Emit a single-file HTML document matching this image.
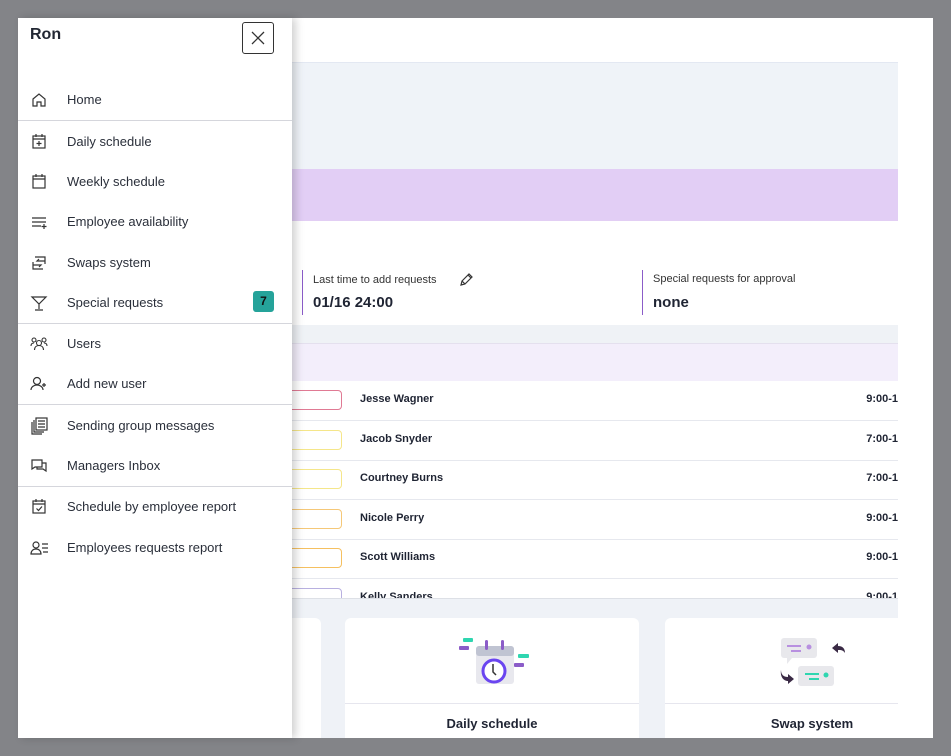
<!DOCTYPE html>
<html><head><style>
*{margin:0;padding:0;box-sizing:border-box}
body{width:951px;height:756px;background:#838488;font-family:"Liberation Sans",sans-serif;position:relative;overflow:hidden;color:#1f2433}
.abs{position:absolute}
#main{left:18px;top:18px;width:915px;height:720px;background:#fff;overflow:hidden}
#clip{left:0;top:0;width:880px;height:720px;overflow:hidden}
.row{position:absolute;left:274px;width:606px;height:40px;border-bottom:1px solid #e6e8ee;font-size:11px;font-weight:bold}
.row .b{position:absolute;left:-20px;top:9px;width:70px;height:20px;border:1px solid;border-radius:4px}
.row .n{position:absolute;left:68px;top:12px}
.row .t{position:absolute;right:0;top:12px}
#side{left:18px;top:18px;width:274px;height:720px;background:#fff;box-shadow:4px 0 8px rgba(0,0,0,.18)}
.it{position:absolute;left:0;width:274px;font-size:13px;color:#2a2f3a}
.it span{position:absolute;left:49px}
.it svg{position:absolute;left:12px;top:-1px}
.sep{position:absolute;left:0;width:274px;height:1px;background:#d5d6dc}
.card{position:absolute;top:600px;height:130px;background:#fff;border-radius:6px}
</style></head><body>
<div id="main" class="abs"><div id="clip" class="abs">
 <div class="abs" style="left:0;top:44px;width:880px;height:107px;background:#eff3f8;border-top:1px solid #e3e8f2"></div>
 <div class="abs" style="left:0;top:151px;width:880px;height:52px;background:#e2cef5"></div>
 <div class="abs" style="left:0;top:203px;width:880px;height:104px;background:#fff;box-shadow:0 2px 3px rgba(0,0,0,.08)"></div>
 <div class="abs" style="left:284px;top:252px;width:1px;height:45px;background:#8b5cc8"></div>
 <div class="abs" style="left:295px;top:256px;font-size:11px;color:#333">Last time to add requests</div>
 <svg class="abs" style="left:440px;top:254px" width="16" height="16" viewBox="0 0 16 16"><path d="M3 13l1-4 7-7 3 3-7 7z M10 3l3 3 M4 9l3 3" fill="none" stroke="#333" stroke-width="1.2"/></svg>
 <div class="abs" style="left:295px;top:276px;font-size:15px;font-weight:bold">01/16 24:00</div>
 <div class="abs" style="left:624px;top:252px;width:1px;height:45px;background:#8b5cc8"></div>
 <div class="abs" style="left:635px;top:255px;font-size:11px;color:#333">Special requests for approval</div>
 <div class="abs" style="left:635px;top:276px;font-size:15px;font-weight:bold">none</div>
 <div class="abs" style="left:0;top:307px;width:880px;height:18px;background:#eff2f6"></div>
 <div class="abs" style="left:0;top:325px;width:880px;height:38px;background:#f3eefb;border-top:1px solid #e4e0ee"></div>
 <div class="row" style="top:363px"><div class="b" style="border-color:#e07a94"></div><div class="n">Jesse Wagner</div><div class="t">9:00-1</div></div>
 <div class="row" style="top:403px"><div class="b" style="border-color:#f5e68a"></div><div class="n">Jacob Snyder</div><div class="t">7:00-1</div></div>
 <div class="row" style="top:442px"><div class="b" style="border-color:#f5e68a"></div><div class="n">Courtney Burns</div><div class="t">7:00-1</div></div>
 <div class="row" style="top:482px"><div class="b" style="border-color:#f5c878"></div><div class="n">Nicole Perry</div><div class="t">9:00-1</div></div>
 <div class="row" style="top:521px"><div class="b" style="border-color:#f5c060"></div><div class="n">Scott Williams</div><div class="t">9:00-1</div></div>
 <div class="row" style="top:561px;height:19px;overflow:hidden;border:none"><div class="b" style="border-color:#b8b0e0"></div><div class="n">Kelly Sanders</div><div class="t">9:00-1</div></div>
 <div class="abs" style="left:0;top:580px;width:880px;height:140px;background:#eff2f7;border-top:1px solid #dde0e6"></div>
 <div class="card" style="left:60px;width:243px"></div>
 <div class="card" style="left:327px;width:294px">
  <div class="abs" style="left:0;top:85px;width:294px;height:1px;background:#e6e6ee"></div>
  <div class="abs" style="left:0;top:98px;width:294px;text-align:center;font-size:13px;font-weight:bold">Daily schedule</div>
  <svg class="abs" style="left:114px;top:18px" width="76" height="52"><rect x="17" y="10" width="38" height="38" rx="3" fill="#e8e8ee"/><rect x="17" y="10" width="38" height="10" rx="3" fill="#c0c4d2"/><rect x="26" y="4" width="3" height="10" rx="1.5" fill="#8b5cc8"/><rect x="42" y="4" width="3" height="10" rx="1.5" fill="#8b5cc8"/><rect x="4" y="2" width="10" height="4" rx="1" fill="#2fd6b0"/><rect x="0" y="10" width="10" height="4" rx="1" fill="#8b5cc8"/><rect x="59" y="18" width="11" height="4" rx="1" fill="#2fd6b0"/><rect x="55" y="27" width="10" height="4" rx="1" fill="#8b5cc8"/><circle cx="35" cy="35" r="11" fill="#fff" stroke="#6a45f0" stroke-width="3"/><path d="M34 28v8l3 3" stroke="#333" stroke-width="1.5" fill="none"/></svg>
 </div>
 <div class="card" style="left:647px;width:294px">
  <div class="abs" style="left:0;top:85px;width:294px;height:1px;background:#e6e6ee"></div>
  <div class="abs" style="left:0;top:98px;width:294px;text-align:center;font-size:13px;font-weight:bold">Swap system</div>
  <svg class="abs" style="left:112px;top:18px" width="80" height="56"><rect x="4" y="2" width="36" height="20" rx="3" fill="#e8e8ec"/><path d="M10 22l0 6 5-6z" fill="#e8e8ec"/><rect x="10" y="9" width="14" height="2" fill="#b890e0"/><rect x="14" y="14" width="10" height="2" fill="#b890e0"/><circle cx="32" cy="11" r="2.5" fill="#b890e0"/><rect x="21" y="30" width="36" height="20" rx="3" fill="#e8e8ec"/><rect x="28" y="37" width="14" height="2" fill="#2fd6b0"/><rect x="32" y="42" width="10" height="2" fill="#2fd6b0"/><circle cx="49" cy="39" r="2.5" fill="#2fd6b0"/><path d="M55 12l6-5v3c5 0 7 3 7 7-2-3-4-3-7-3v3z" fill="#3a2a45"/><path d="M4 34c0 5 3 7 7 7v-3l6 5-6 5v-3c-5 0-8-5-7-11z" fill="#3a2a45"/></svg>
 </div>
</div></div>
<div id="side" class="abs">
 <div class="abs" style="left:12px;top:8px;font-size:16px;font-weight:bold;color:#222733">Ron</div>
 <div class="abs" style="left:224px;top:4px;width:32px;height:32px;border:1px solid #333;border-radius:3px"><svg width="30" height="30"><path d="M9 9l12 12M21 9L9 21" stroke="#333" stroke-width="1.3"/></svg></div>
 <div class="it" style="top:74px"><svg width="18" height="18" viewBox="0 0 18 18" fill="none" stroke="#333" stroke-width="1.2"><path d="M3 8l6-5 6 5v7h-4v-4H7v4H3z"/></svg><span>Home</span></div>
 <div class="sep" style="top:102px"></div>
 <div class="it" style="top:116px"><svg width="18" height="18" viewBox="0 0 18 18" fill="none" stroke="#333" stroke-width="1.2"><rect x="3" y="3" width="12" height="12"/><path d="M3 6h12M6 1v3M12 1v3M9 8v5M6.5 10.5h5"/></svg><span>Daily schedule</span></div>
 <div class="it" style="top:156px"><svg width="18" height="18" viewBox="0 0 18 18" fill="none" stroke="#333" stroke-width="1.2"><rect x="3" y="3" width="12" height="12"/><path d="M3 6h12M6 1v3M12 1v3"/></svg><span>Weekly schedule</span></div>
 <div class="it" style="top:196px"><svg width="18" height="18" viewBox="0 0 18 18" fill="none" stroke="#333" stroke-width="1.2"><path d="M2 5h14M2 9h14M2 13h9M14 11v5M11.5 13.5h5"/></svg><span>Employee availability</span></div>
 <div class="it" style="top:237px"><svg width="18" height="18" viewBox="0 0 18 18" fill="none" stroke="#333" stroke-width="1.2"><path d="M5 3h10v7M15 7H7l2-2M3 8v7h10M3 11h8l-2 2"/></svg><span>Swaps system</span></div>
 <div class="it" style="top:277px"><svg width="18" height="18" viewBox="0 0 18 18" fill="none" stroke="#333" stroke-width="1.2"><path d="M2 3h14L9 10zM9 10v5M5 16h8"/></svg><span>Special requests</span><div class="abs" style="left:235px;top:-4px;width:21px;height:21px;background:#25a39a;border-radius:3px;font-size:12px;font-weight:bold;text-align:center;line-height:21px;color:#111">7</div></div>
 <div class="sep" style="top:305px"></div>
 <div class="it" style="top:318px"><svg width="18" height="18" viewBox="0 0 18 18" fill="none" stroke="#333" stroke-width="1.1"><circle cx="9" cy="8" r="2.5"/><path d="M4.5 15c0-3 2-4.5 4.5-4.5s4.5 1.5 4.5 4.5"/><circle cx="4" cy="5" r="2"/><circle cx="14" cy="5" r="2"/><path d="M1 11c0-2 1-3 3-3M17 11c0-2-1-3-3-3"/></svg><span>Users</span></div>
 <div class="it" style="top:358px"><svg width="18" height="18" viewBox="0 0 18 18" fill="none" stroke="#333" stroke-width="1.2"><circle cx="7" cy="6" r="3.5"/><path d="M1 15c0-3 3-5 6-5s6 2 6 5M14 8v4M12 10h4"/></svg><span>Add new user</span></div>
 <div class="sep" style="top:386px"></div>
 <div class="it" style="top:400px"><svg width="20" height="18" viewBox="0 0 20 18" fill="none" stroke="#333" stroke-width="1.2"><rect x="6" y="1" width="11" height="12"/><path d="M4 3v12h10M2 5v12h10M8 4h7M8 7h7M8 10h7"/></svg><span>Sending group messages</span></div>
 <div class="it" style="top:440px"><svg width="18" height="18" viewBox="0 0 18 18" fill="none" stroke="#333" stroke-width="1.2"><path d="M2 3h10v7H5l-3 2zM12 6h4v8l-3-2H7v-2"/></svg><span>Managers Inbox</span></div>
 <div class="sep" style="top:468px"></div>
 <div class="it" style="top:481px"><svg width="18" height="18" viewBox="0 0 18 18" fill="none" stroke="#333" stroke-width="1.2"><rect x="3" y="3" width="12" height="12"/><path d="M3 6h12M6 1v3M12 1v3M6.5 10.5l2 2 3.5-4"/></svg><span>Schedule by employee report</span></div>
 <div class="it" style="top:522px"><svg width="20" height="18" viewBox="0 0 20 18" fill="none" stroke="#333" stroke-width="1.2"><circle cx="6" cy="6" r="3"/><path d="M1 15c0-3 2-5 5-5s5 2 5 5zM12 5h6M12 9h6M13 13h5"/></svg><span>Employees requests report</span></div>
</div>
</body></html>
